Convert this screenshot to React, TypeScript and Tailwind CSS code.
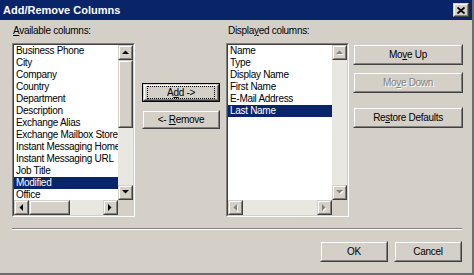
import type { ReactNode } from "react";

const available = [
  "Business Phone",
  "City",
  "Company",
  "Country",
  "Department",
  "Description",
  "Exchange Alias",
  "Exchange Mailbox Store",
  "Instant Messaging Home Page",
  "Instant Messaging URL",
  "Job Title",
  "Modified",
  "Office",
  "Other Address",
];

const displayed = ["Name", "Type", "Display Name", "First Name", "E-Mail Address", "Last Name"];

type Dir = "up" | "down" | "left" | "right";

function Arrow({ dir, disabled }: { dir: Dir; disabled?: boolean }) {
  const pts: Record<Dir, string> = {
    up: "0,4 7,4 3.5,0.5",
    down: "0,0 7,0 3.5,3.5",
    left: "4,0 4,7 0.5,3.5",
    right: "0,0 0,7 3.5,3.5",
  };
  const vertical = dir === "up" || dir === "down";
  const w = vertical ? 7 : 4;
  const h = vertical ? 4 : 7;
  return (
    <svg width={w + 1} height={h + 1} viewBox={`0 0 ${w + 1} ${h + 1}`}>
      {disabled && <polygon points={pts[dir]} fill="#ffffff" transform="translate(1,1)" />}
      <polygon points={pts[dir]} fill={disabled ? "#808080" : "#000000"} />
    </svg>
  );
}

// classic raised 3D box
function Raised({ className = "", children }: { className?: string; children?: ReactNode }) {
  return (
    <div className={`border border-t-[#d4d0c8] border-l-[#d4d0c8] border-r-[#404040] border-b-[#404040] bg-[#d4d0c8] ${className}`}>
      <div className="flex h-full w-full items-center justify-center border border-t-white border-l-white border-r-[#808080] border-b-[#808080]">
        {children}
      </div>
    </div>
  );
}

function ScrollBtn({ dir, disabled }: { dir: Dir; disabled?: boolean }) {
  return (
    <Raised className="h-[15px] w-[15px] shrink-0">
      <Arrow dir={dir} disabled={disabled} />
    </Raised>
  );
}

function ListBox({
  items,
  selected,
  enabled,
}: {
  items: string[];
  selected: string;
  enabled: boolean;
}) {
  return (
    <div className="h-[174px] w-[123px] border border-t-[#808080] border-l-[#808080] border-r-white border-b-white">
      <div className="flex h-full w-full flex-col border border-t-[#404040] border-l-[#404040] border-r-[#d4d0c8] border-b-[#d4d0c8] bg-white">
        <div className="flex min-h-0 flex-1">
          <div className="min-w-0 flex-1 overflow-hidden">
            {items.map((it) => (
              <div
                key={it}
                className={`h-[12px] whitespace-nowrap pl-[2px] leading-[12px] ${
                  it === selected ? "bg-[#0a246a] text-white" : "text-black"
                }`}
              >
                {it}
              </div>
            ))}
          </div>
          <div className="flex w-[15px] flex-col bg-[#e9e7e2]">
            <ScrollBtn dir="up" disabled={!enabled} />
            {enabled ? (
              <>
                <Raised className="h-[68px] w-[15px]" />
                <div className="flex-1" />
              </>
            ) : (
              <div className="flex-1" />
            )}
            <ScrollBtn dir="down" disabled={!enabled} />
          </div>
        </div>
        <div className="flex h-[15px]">
          <div className="flex flex-1 bg-[#e9e7e2]">
            <ScrollBtn dir="left" disabled={!enabled} />
            {enabled ? <Raised className="h-[15px] w-[41px]" /> : null}
            <div className="flex-1" />
            <ScrollBtn dir="right" disabled={!enabled} />
          </div>
          <div className="w-[15px] bg-[#d4d0c8]" />
        </div>
      </div>
    </div>
  );
}

function Button({
  children,
  className = "",
  disabled,
}: {
  children: ReactNode;
  className?: string;
  disabled?: boolean;
}) {
  return (
    <Raised className={className}>
      <span className={disabled ? "text-[#808080] [text-shadow:1px_1px_#ffffff]" : "text-black"}>{children}</span>
    </Raised>
  );
}

export default function App() {
  return (
    <div className="h-[275px] w-[474px] overflow-hidden bg-[#d4d0c8] font-['Liberation_Sans',Arial,sans-serif] text-[10px] tracking-[-0.3px] text-black">
      <div className="h-full w-full border-r-2 border-b-2 border-r-[#6e6e6e] border-b-[#6e6e6e]">
        <div className="flex h-[20px] items-center justify-between bg-[#0a246a] pl-[3px] pr-[3px]">
          <span className="text-[11px] font-bold tracking-normal text-white">Add/Remove Columns</span>
          <Raised className="h-[14px] w-[16px]">
            <svg width="8" height="7" viewBox="0 0 8 7">
              <path d="M0.5 0.5 L7.5 6.5 M7.5 0.5 L0.5 6.5" stroke="#000" strokeWidth="1.8" />
            </svg>
          </Raised>
        </div>

        <div className="flex pl-[12px] pt-[5px]">
          <div className="flex flex-col">
            <div className="h-[12px] pl-[1px] leading-[12px]">
              <span className="underline">A</span>vailable columns:
            </div>
            <div className="mt-[6px]">
              <ListBox items={available} selected="Modified" enabled />
            </div>
          </div>

          <div className="ml-[7px] flex w-[78px] flex-col pt-[58px]">
            <div className="h-[19px] border border-black">
              <Raised className="h-full w-full">
                <div className="m-[2px] flex h-full w-full items-center justify-center border border-dotted border-black">
                  A<span className="underline">d</span>d -&gt;
                </div>
              </Raised>
            </div>
            <Button className="mt-[8px] h-[19px]">
              &lt;- <span className="underline">R</span>emove
            </Button>
          </div>

          <div className="ml-[6px] flex flex-col">
            <div className="h-[12px] pl-[2px] leading-[12px]">
              Displa<span className="underline">y</span>ed columns:
            </div>
            <div className="mt-[6px]">
              <ListBox items={displayed} selected="Last Name" enabled={false} />
            </div>
          </div>

          <div className="ml-[4px] flex w-[110px] flex-col pt-[19px]">
            <Button className="h-[21px]">
              Mo<span className="underline">v</span>e Up
            </Button>
            <Button className="mt-[7px] h-[21px]" disabled>
              Mo<span className="underline">v</span>e Down
            </Button>
            <Button className="mt-[14px] h-[21px]">
              Re<span className="underline">s</span>tore Defaults
            </Button>
          </div>
        </div>

        <div className="ml-[12px] mt-[11px] w-[450px] border-t border-b border-t-[#808080] border-b-white" />

        <div className="mt-[11px] flex justify-end gap-[6px] pr-[10px]">
          <Button className="h-[21px] w-[68px]">OK</Button>
          <Button className="h-[21px] w-[68px]">Cancel</Button>
        </div>
      </div>
    </div>
  );
}
